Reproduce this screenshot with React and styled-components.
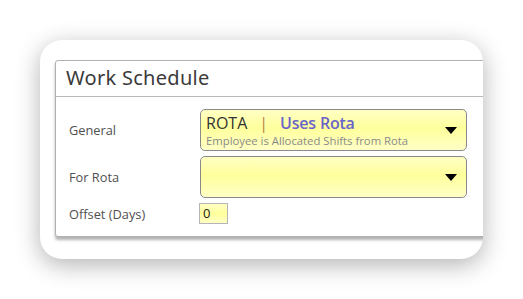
import styled, { createGlobalStyle } from "styled-components";

const GlobalStyle = createGlobalStyle`
  body {
    margin: 0;
    background: #ffffff;
    font-family: "Open Sans", "Liberation Sans", sans-serif;
  }
`;

export default function App() {
  return (
    <>
      <GlobalStyle />
      <Page>
        <Card>
          <Panel>
            <PanelHeader>Work Schedule</PanelHeader>
            <PanelBody>
              <Row>
                <Label>General</Label>
                <Select>
                  <SelectText>
                    <MainLine>
                      <Code>ROTA</Code>
                      <Divider>|</Divider>
                      <Name>Uses Rota</Name>
                    </MainLine>
                    <SubLine>Employee is Allocated Shifts from Rota</SubLine>
                  </SelectText>
                  <Arrow />
                </Select>
              </Row>
              <Row>
                <Label>For Rota</Label>
                <Select>
                  <SelectText />
                  <Arrow />
                </Select>
              </Row>
              <Row>
                <Label>Offset (Days)</Label>
                <NumberBox>0</NumberBox>
              </Row>
            </PanelBody>
          </Panel>
        </Card>
      </Page>
    </>
  );
}

const Page = styled.div`
  width: 523px;
  height: 299px;
  padding: 40px 0 0 40px;
  box-sizing: border-box;
`;

const Card = styled.div`
  width: 443px;
  height: 219px;
  background: #ffffff;
  border-radius: 22px;
  box-shadow: 0 6px 24px rgba(0, 0, 0, 0.3);
  overflow: hidden;
  padding: 20px 0 0 15px;
  box-sizing: border-box;
`;

const Panel = styled.div`
  width: 440px;
  height: 177px;
  border: 1px solid #b0b0b0;
  border-radius: 3px;
  background: #fff;
  box-shadow: 0 3px 3px rgba(0, 0, 0, 0.3);
  box-sizing: border-box;
`;

const PanelHeader = styled.div`
  height: 35px;
  border-bottom: 1px solid #b8b8b8;
  padding-left: 10px;
  font-family: "Noto Sans", sans-serif;
  font-size: 20px;
  font-weight: 400;
  letter-spacing: 0.3px;
  color: #3a3a3a;
  line-height: 33px;
`;

const PanelBody = styled.div`
  display: flex;
  flex-direction: column;
  gap: 5px;
  padding: 12px 0 0 13px;
`;

const Row = styled.div`
  display: flex;
  align-items: center;
`;

const Label = styled.div`
  width: 131px;
  font-size: 12.8px;
  color: #505050;
`;

const Select = styled.div`
  width: 267px;
  height: 42px;
  box-sizing: border-box;
  border: 1px solid #8a8a8a;
  border-radius: 5px;
  background: linear-gradient(#ffffc4, #ffff9c 45%, #ffffc6);
  display: flex;
  align-items: center;
  padding: 0 5px;
`;

const SelectText = styled.div`
  flex: 1;
  display: flex;
  flex-direction: column;
`;

const MainLine = styled.div`
  display: flex;
  align-items: baseline;
  font-size: 16px;
  line-height: 21px;
`;

const Code = styled.span`
  color: #333;
  font-weight: 500;
`;

const Divider = styled.span`
  color: #b8804a;
  margin: 0 12px 0 12px;
`;

const Name = styled.span`
  color: #6a64c8;
  font-weight: 600;
  letter-spacing: -0.2px;
`;

const SubLine = styled.div`
  font-size: 11.3px;
  color: #8a8a8a;
  line-height: 14px;
`;

const Arrow = styled.div`
  width: 0;
  height: 0;
  border-left: 6px solid transparent;
  border-right: 6px solid transparent;
  border-top: 7px solid #000;
  margin-right: 4px;
`;

const NumberBox = styled.div`
  width: 29px;
  height: 21px;
  box-sizing: border-box;
  border: 1px solid #b5b5b5;
  background: linear-gradient(#ffffc4, #ffff9c 50%, #ffffc6);
  font-size: 13px;
  line-height: 19px;
  padding-left: 3px;
  color: #222;
  margin-left: -1px;
`;
